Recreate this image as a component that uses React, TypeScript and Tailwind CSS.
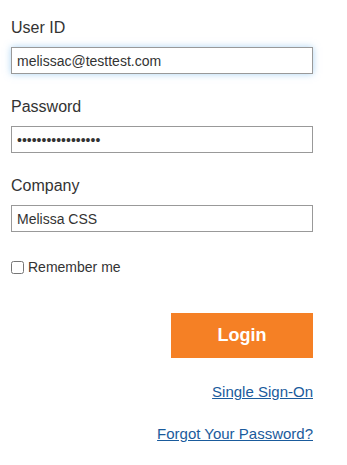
import React from 'react';

const Field: React.FC<{ label: string; children: React.ReactNode; className?: string }> = ({ label, children, className }) => (
  <div className={className}>
    <label className="block text-[16px] leading-[20px] text-[#333333]">{label}</label>
    <div className="mt-[9px]">{children}</div>
  </div>
);

const inputCls =
  'block w-full h-[27px] border border-[#999999] bg-white px-[5px] text-[14px] text-[#333333] outline-none';

const App: React.FC = () => {
  return (
    <div className="min-h-screen bg-white font-['Liberation_Sans',Arial,sans-serif]">
      <form className="ml-[11px] w-[302px] pt-[18px] flex flex-col" onSubmit={e => e.preventDefault()}>
        <Field label="User ID">
          <input
            type="text"
            defaultValue="melissac@testtest.com"
            className={`${inputCls} shadow-[0_0_7px_rgba(102,175,233,0.55)]`}
          />
        </Field>
        <Field label="Password" className="mt-[23px]">
          <input type="password" defaultValue="melissatestpass12" className={inputCls} />
        </Field>
        <Field label="Company" className="mt-[23px]">
          <input type="text" defaultValue="Melissa CSS" className={inputCls} />
        </Field>

        {/* Remember me */}
        <label className="mt-[27px] flex h-[16px] items-center gap-[4px] text-[14px] leading-[16px] text-[#333333]">
          <input type="checkbox" className="h-[13px] w-[13px] m-0" />
          <span>Remember me</span>
        </label>

        <button
          type="submit"
          className="mt-[38px] self-end w-[142px] h-[45px] bg-[#f58025] text-white font-bold text-[18px]"
        >
          Login
        </button>

        <a href="#" className="mt-[25px] self-end text-[15px] leading-[18px] text-[#1a5b9c] underline">
          Single Sign-On
        </a>
        <a href="#" className="mt-[24px] self-end text-[15px] leading-[18px] text-[#1a5b9c] underline">
          Forgot Your Password?
        </a>
      </form>
    </div>
  );
};

export default App;
